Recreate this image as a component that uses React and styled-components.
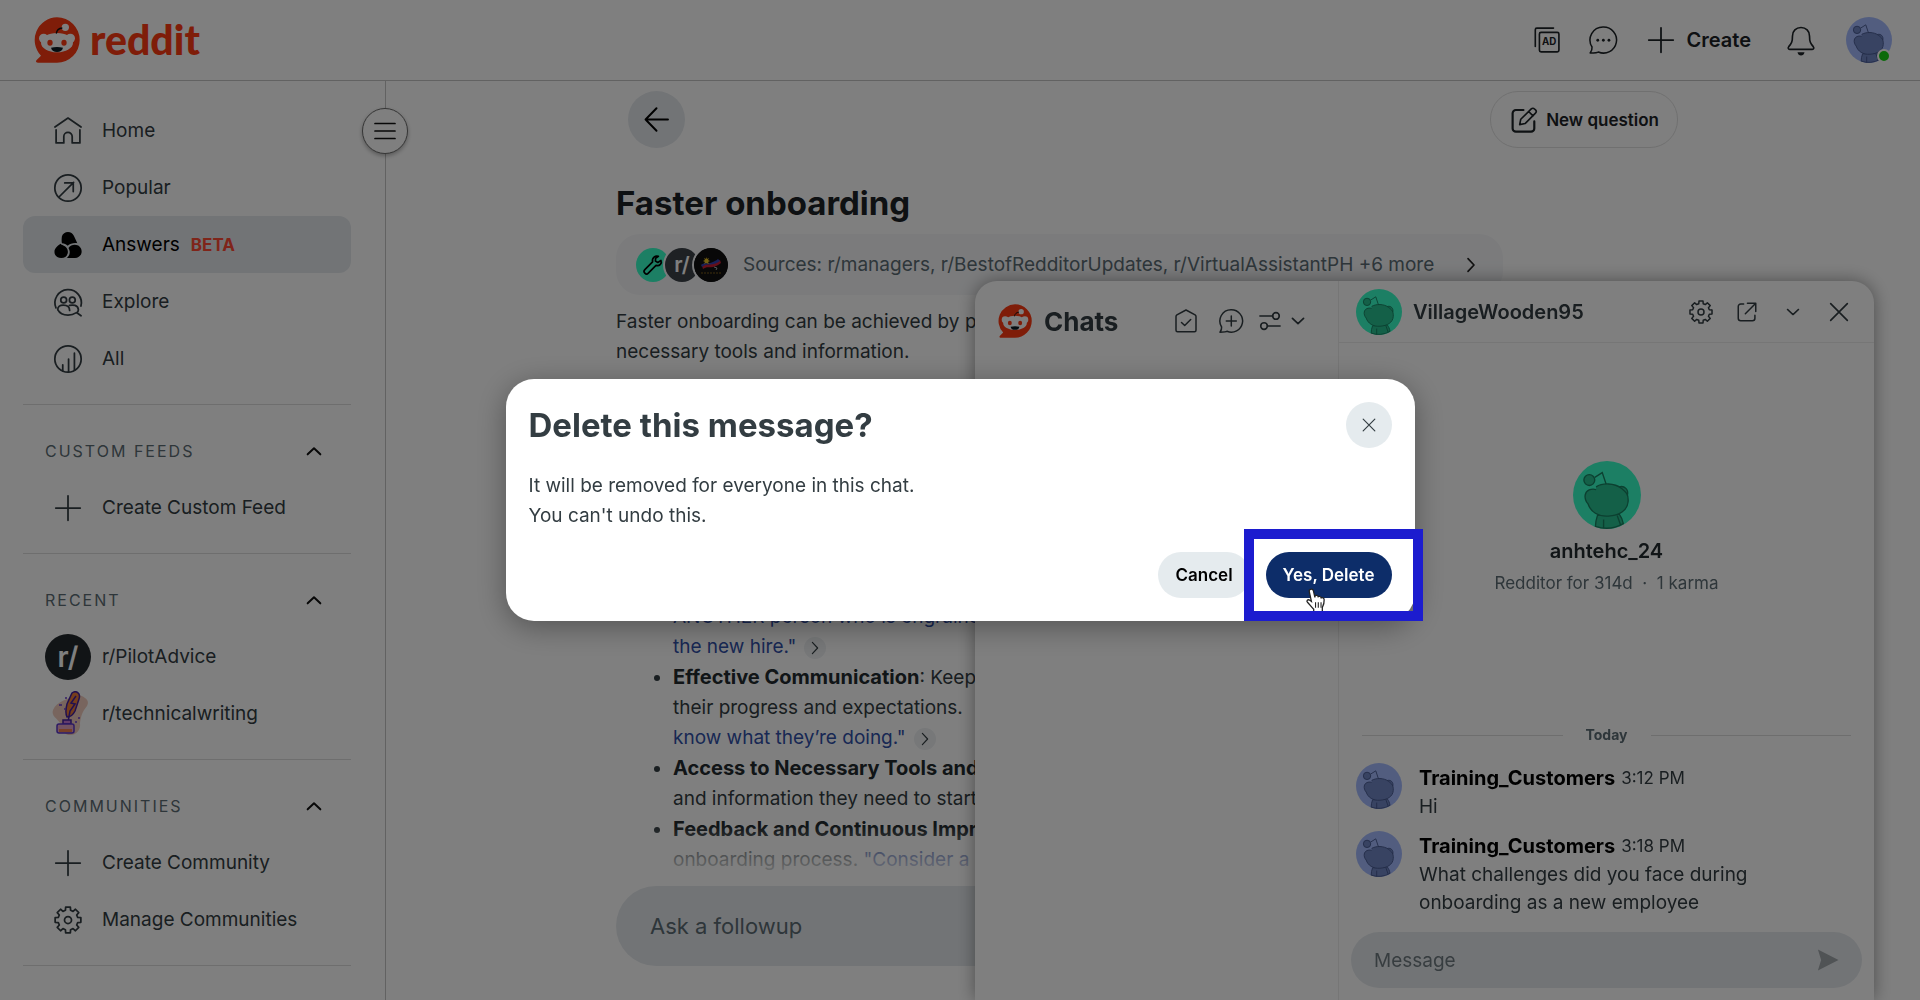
import React from "react";
import styled, { createGlobalStyle } from "styled-components";

const navItems = [
  { icon: "home", label: "Home" },
  { icon: "popular", label: "Popular" },
  { icon: "answers", label: "Answers", badge: "BETA", active: true },
  { icon: "explore", label: "Explore" },
  { icon: "all", label: "All" },
];

const messages = [
  { id: 1, user: "Training_Customers", time: "3:12 PM", text: "Hi" },
  {
    id: 2,
    user: "Training_Customers",
    time: "3:18 PM",
    text: "What challenges did you face during onboarding as a new employee",
  },
];

const gearPath = () => {
  const points = [];
  for (let i = 0; i < 8; i++) {
    const base = (i * Math.PI) / 4;
    [
      [8.6, -0.26],
      [11.2, -0.18],
      [11.2, 0.18],
      [8.6, 0.26],
    ].forEach(([r, a]) => {
      const x = 12 + r * Math.sin(base + a);
      const y = 12 - r * Math.cos(base + a);
      points.push(`${x.toFixed(2)} ${y.toFixed(2)}`);
    });
  }
  return `M${points.join("L")}Z`;
};

const icons = {
  home: (
    <>
      <path d="M.8 8.6 12 .9l11.2 7.7" />
      <path d="M1.8 11v11.2h6.6v-5.4a3.6 3.6 0 0 1 7.2 0v5.4h6.6V11" />
    </>
  ),
  popular: (
    <>
      <circle cx="12" cy="12" r="11.3" />
      <path d="M4.5 19.5 16.8 7.2M9.2 7.7h7.3V15" />
    </>
  ),
  answers: (
    <g fill="currentColor" stroke="none">
      <path d="M12 .8c2.300 0 4.100 1.200 5 3.200l3 6.500c-3.400-.4-6.200.3-8.300 2.200-1.300-1.300-2.900-2.100-4.900-2.200C6.400 9 6.500 6.500 6.800 4.600 7.400 2.200 9.600.8 12 .8Z" />
      <path d="M5.500 11c.6.800 1.400 1.100 2.500 1.400 2.400.8 3.900 3 3.900 5.400 0 3-2.200 5.400-5.600 5.400-3.300 0-5.900-2.100-5.900-5.300 0-2.800 2.300-4.900 5.100-6.900Z" />
      <path d="M17.800 11.800c3.400 0 5.900 2.500 5.900 5.700s-2.400 5.600-5.700 5.600h-7c2-1.600 2.800-3.600 2.400-6-.2-1-.5-1.800-1-2.600 1.400-1.800 3.200-2.700 5.400-2.700Z" />
    </g>
  ),
  explore: (
    <>
      <path d="M1.700 17A11.300 11.300 0 1 1 23.100 15.500" />
      <circle cx="8.300" cy="10.300" r="2.500" />
      <circle cx="15.700" cy="10.300" r="2.500" />
      <path d="M3.200 18.600c0-2.800 2-4 4.700-4 3.400 0 5.500 1 5.500 4.600M3.200 18.600c1.500 3 5 4.700 8.800 4.700 2.800 0 5-.7 6.800-2M13.300 14.900c3-.7 7.200-.4 7.600 3.700 0 1-.6 2-1.300 2.600l3.600 2.600" />
    </>
  ),
  all: (
    <>
      <circle cx="12" cy="12" r="11.300" />
      <path d="M7.500 22v-5M12.500 23V12M17.500 21.500V7" />
    </>
  ),
  plus: <path d="M12 1.500v21M1.500 12h21" />,
  gear: (
    <>
      <path d={gearPath()} />
      <circle cx="12" cy="12" r="3" />
    </>
  ),
  up: <path d="m2.500 17 9.500-9 9.500 9" />,
  down: <path d="m2.500 7.500 9.500 9 9.500-9" />,
  right: <path d="m7.500 2.500 9 9.500-9 9.500" />,
  menu: <path d="M2 4.500h20M2 12h20M2 19.500h20" />,
  back: <path d="M23 12H1.500M12 1.200 1.500 12 12 22.800" />,
  close: <path d="m2 2 20 20M22 2 2 22" />,
  ad: (
    <>
      <path d="M1.200 18V2.500C1.200 1.500 1.800 1 2.600 1H18" />
      <rect x="5" y="5" width="18" height="18" rx="1.500" />
      <text x="14" y="17" textAnchor="middle" fontSize="9" fontWeight="700" fill="currentColor" stroke="none">
        AD
      </text>
    </>
  ),
  chat: (
    <>
      <path d="M12.300.8A11.200 11.200 0 1 1 8 22.300c-.6.7-1.600.9-7 .9 1.300-1.800 1.800-3.300 1.600-5.200A11.200 11.200 0 0 1 12.300.8Z" />
      <g fill="currentColor" stroke="none">
        <circle cx="7.500" cy="12.200" r="1.200" />
        <circle cx="12.300" cy="12.200" r="1.200" />
        <circle cx="17.100" cy="12.200" r="1.200" />
      </g>
    </>
  ),
  chatPlus: (
    <>
      <path d="M12.300.8A11.200 11.200 0 1 1 8 22.300c-.6.7-1.600.9-7 .9 1.300-1.800 1.800-3.300 1.600-5.200A11.200 11.200 0 0 1 12.300.8Z" />
      <path d="M12.300 7v10M7.300 12h10" />
    </>
  ),
  bell: (
    <>
      <path d="M12 1.300c4.300 0 7.300 3 7.300 7.200 0 5 .8 6.400 3.200 9.200.9 1.200.4 2.300-.8 2.300H2.300c-1.200 0-1.700-1.100-.8-2.300 2.400-2.800 3.200-4.200 3.200-9.200 0-4.200 3-7.200 7.300-7.200Z" />
      <path d="M9 22.500h6c-.4 1.800-1.500 2.800-3 2.800s-2.600-1-3-2.800Z" fill="currentColor" stroke="none" />
    </>
  ),
  compose: (
    <>
      <path d="M11.500 2.800H4.500a3 3 0 0 0-3 3v14a3 3 0 0 0 3 3h14a3 3 0 0 0 3-3v-6.500" strokeWidth="2" />
      <path d="m8 16.300 1-5L18.700 1.800c.8-.8 2.200-.8 3 0l.9.900c.8.8.8 2.200 0 3L13 15.300l-5 1ZM16.300 4.200l4 4" />
    </>
  ),
  inbox: (
    <>
      <path d="M2 7.500a2 2 0 0 1 .9-1.700L12 1l9.100 4.800a2 2 0 0 1 .9 1.700v13.700a1.500 1.500 0 0 1-1.500 1.500h-17A1.500 1.500 0 0 1 2 21.200Z" />
      <path d="m7.500 13.500 3.200 3 6-6" />
    </>
  ),
  filter: (
    <>
      <path d="M1 6.500h14M10 17.500h13" />
      <circle cx="18.500" cy="6.500" r="3.600" />
      <circle cx="5.500" cy="17.500" r="3.600" />
    </>
  ),
  external: (
    <path d="M8 2.500H4.500a3 3 0 0 0-3 3v14a3 3 0 0 0 3 3h14a3 3 0 0 0 3-3V16M12.500 1.500h10v10M22.500 1.500 10 14" />
  ),
  wrench: (
    <path d="M21.500 6.500 17.800 9l-2.900-1.700.2-3.400 3.400-2.300c-3.500-1.300-8.200 1.500-7 6.700L2.200 17.600a2.900 2.900 0 0 0 4.200 4.200l9.200-9.300c4.500 1.100 7.500-2.500 5.900-6Z" />
  ),
  send: <path d="M1 .5 23.500 12 1 23.500 4.500 12Z" fill="currentColor" stroke="none" />,
};

const Icon = ({ name, size = 28, weight = 1 }) => (
  <Glyph $size={size} viewBox="0 0 24 24" strokeWidth={weight} aria-hidden="true">
    {icons[name]}
  </Glyph>
);

const Snoo = () => (
  <svg viewBox="0 0 138 138" aria-hidden="true">
    <path
      fill="#ff3a12"
      d="M69 1a68 68 0 1 1 0 136H12c-6 0-8-4-4-8l13-13A68 68 0 0 1 69 1Z"
    />
    <g fill="#fff">
      <circle cx="29" cy="64" r="14" />
      <circle cx="109" cy="64" r="14" />
      <ellipse cx="69" cy="77" rx="48" ry="29" />
      <circle cx="94" cy="31" r="11" />
    </g>
    <path d="M67 50c1-10 8-16 18-17" fill="none" stroke="#111" strokeWidth="4" />
    <g fill="#ff3a12">
      <ellipse cx="48" cy="77" rx="8" ry="9" />
      <ellipse cx="90" cy="77" rx="8" ry="9" />
    </g>
    <path fill="#0b1a22" d="M51 92q18-4 36 0c-2 9-9 13-18 13s-16-4-18-13Z" />
  </svg>
);

const UserAvatar = ({ color, size }) => {
  const [bg, fill, line] =
    color === "green" ? ["#38ffc8", "#28c090", "#188061"] : ["#a5bbff", "#7086c4", "#46588f"];
  return (
    <AvatarSvg $size={size} viewBox="0 0 100 100" aria-hidden="true">
      <circle cx="50" cy="50" r="50" fill={bg} />
      <g fill={fill} stroke={line} strokeWidth="2">
        <path d="M36 80c-2 6-3 10-3 16a50 50 0 0 0 41-4c-1-6-3-10-6-14Z" />
        <path d="M45 86v13M65 80l5 14" fill="none" />
        <path d="M32 24 43 17 49 35" fill="none" />
        <circle cx="24" cy="28" r="8" />
        <path d="M68 38c8-2 14 4 12 12l-6-2Z" />
        <path d="M34 38c9-6 27-6 37 2 6 5 11 8 10 20-1 13-13 20-29 21-15 1-26-6-30-18-3-3-5-9-4-13 1-7 9-10 16-8" />
      </g>
    </AvatarSvg>
  );
};

const WritingAvatar = () => (
  <AvatarSvg $size={46} viewBox="0 0 46 46" aria-hidden="true">
    <path d="M8 19C12 9 24 9 32 3c5 2 14 5 10 12-5 6-6 10-7 17 1 7-4 13-12 12-5-2-5-6-8-12-3-5-9-7-7-13Z" fill="#e8a890" opacity=".6" />
    <path d="M27 2c4-3 9 0 7 6l-4 12c-2 4-5 6-8 6-2-4-1-9 0-13Z" fill="#ec7c38" stroke="#43209f" strokeWidth="1.500" />
    <path d="m31 5-5 7 4 1-5 7-2 11" fill="none" stroke="#43209f" strokeWidth="1.500" />
    <rect x="18" y="29" width="8" height="4" fill="#c678d8" stroke="#43209f" strokeWidth="1.500" />
    <rect x="12" y="33" width="17" height="9" rx="2" fill="#e5a4c4" stroke="#5a35c8" strokeWidth="1.500" />
    <path d="M14 38h13v3H14Z" fill="#f08050" />
    <path d="M14 14h3M20 7h2M19 18h2M33 27h2M30 31h2" stroke="#6a3fd0" strokeWidth="1.500" />
  </AvatarSvg>
);

const FlagAvatar = () => (
  <svg viewBox="0 0 34 34" width="34" height="34" aria-hidden="true">
    <circle cx="17" cy="17" r="17" fill="#111" />
    <path d="M8 18c5-4 8 1 18-6l1 3c-8 7-13 2-18 6Z" fill="#c91f34" />
    <path d="M7 17c5-4 8 1 17-6l2 2c-8 6-12 1-18 6Z" fill="#3040b0" />
    <path d="m12 9 1 2 2-1-1 2 2 1-2 1 1 2-3-1-2 1 1-2-2-1 2-1-1-2 2 1Z" fill="#e8c020" />
    <path d="M7 25h20" stroke="#7d5c18" strokeDasharray="2 1" />
    <path d="m20 19 3 1-1 2" stroke="#aaa" fill="none" />
  </svg>
);

const Pointer = () => (
  <PointerSvg viewBox="0 0 24 28" aria-hidden="true">
    <path
      d="M6 2.500c1.500-.8 2.800 0 3.200 1.600l1.600 7 .2-1.700c1.500-1 3-.4 3.400 1 1.300-.8 2.800-.2 3.200 1.300 1.600-.8 3.200 0 3.300 2 .2 4-.7 6-2 8.500V27H9.500v-3c-2.500-2-3.800-4.500-6.800-7.500-1.500-1.700.3-3.500 2.300-2.400l2 1.500L4.700 5c-.3-1.200.2-2.200 1.300-2.500Z"
      fill="#fff"
      stroke="#222"
      strokeWidth="1.400"
    />
    <path d="M11.500 16.500v6M14.500 16.500v6M17.500 16.500v6" stroke="#222" strokeWidth="1.200" />
  </PointerSvg>
);

const NavSection = ({ title, children }) => (
  <>
    <Divider />
    <SectionButton type="button">
      {title}
      <Icon name="up" size={16} weight={3} />
    </SectionButton>
    {children}
  </>
);

export default function App() {
  return (
    <>
      <GlobalStyle />
      <Page>
        <Header>
          <Logo href="#">
            <Snoo />
            reddit
          </Logo>
          <Actions>
            <IconButton $size={56} aria-label="Advertise">
              <Icon name="ad" size={26} weight={1.500} />
            </IconButton>
            <IconButton $size={56} aria-label="Open chat">
              <Icon name="chat" weight={1.300} />
            </IconButton>
            <CreateButton>
              <Icon name="plus" weight={1.500} />
              Create
            </CreateButton>
            <IconButton $size={56} aria-label="Notifications">
              <Icon name="bell" weight={1.400} />
            </IconButton>
            <ProfileButton aria-label="Profile">
              <UserAvatar color="blue" size={46} />
              <OnlineDot />
            </ProfileButton>
          </Actions>
        </Header>

        <Body>
          <Sidebar>
            <MenuToggle aria-label="Collapse navigation">
              <Icon name="menu" size={24} weight={1.700} />
            </MenuToggle>
            {navItems.map((item) => (
              <NavLink key={item.label} href="#" $active={item.active}>
                <NavIcon>
                  <Icon name={item.icon} weight={1.500} />
                </NavIcon>
                {item.label}
                {item.badge && <Beta>{item.badge}</Beta>}
              </NavLink>
            ))}
            <NavSection title="CUSTOM FEEDS">
              <NavLink href="#">
                <NavIcon>
                  <Icon name="plus" weight={1.500} />
                </NavIcon>
                Create Custom Feed
              </NavLink>
            </NavSection>
            <NavSection title="RECENT">
              <NavLink href="#">
                <NavIcon>
                  <SubAvatar $size={46}>r/</SubAvatar>
                </NavIcon>
                r/PilotAdvice
              </NavLink>
              <NavLink href="#">
                <NavIcon>
                  <WritingAvatar />
                </NavIcon>
                r/technicalwriting
              </NavLink>
            </NavSection>
            <NavSection title="COMMUNITIES">
              <NavLink href="#">
                <NavIcon>
                  <Icon name="plus" weight={1.500} />
                </NavIcon>
                Create Community
              </NavLink>
              <NavLink href="#">
                <NavIcon>
                  <Icon name="gear" weight={1.500} />
                </NavIcon>
                Manage Communities
              </NavLink>
            </NavSection>
            <Divider />
          </Sidebar>

          <Main>
            <Toolbar>
              <BackButton aria-label="Back">
                <Icon name="back" size={25} weight={1.900} />
              </BackButton>
              <NewQuestion>
                <Icon name="compose" size={26} weight={1.500} />
                New question
              </NewQuestion>
            </Toolbar>
            <Answer>
              <Title>Faster onboarding</Title>
              <Sources>
                <SourceAvatars>
                  <SubAvatar $size={34} $bg="#38ffc8">
                    <Icon name="wrench" size={20} weight={2} />
                  </SubAvatar>
                  <SubAvatar $size={34} $bg="#3c4248">r/</SubAvatar>
                  <SubAvatar $size={34}>
                    <FlagAvatar />
                  </SubAvatar>
                </SourceAvatars>
                Sources: r/managers, r/BestofRedditorUpdates, r/VirtualAssistantPH +6 more
                <Icon name="right" size={16} weight={2.500} />
              </Sources>
              <Paragraph>
                Faster onboarding can be achieved by providing
                <br />
                necessary tools and information.
              </Paragraph>
              <Points>
                <li className="open">
                  <a href="#">
                    ANOTHER person who is engrained
                    <br />
                    the new hire."
                  </a>
                  <Cite aria-label="Open source">
                    <Icon name="right" size={14} weight={2} />
                  </Cite>
                </li>
                <li>
                  <b>Effective Communication</b>: Keep new hires
                  <br />
                  their progress and expectations.
                  <br />
                  <a href="#">know what they’re doing."</a>
                  <Cite aria-label="Open source">
                    <Icon name="right" size={14} weight={2} />
                  </Cite>
                </li>
                <li>
                  <b>Access to Necessary Tools and</b>
                  <br />
                  and information they need to start
                </li>
                <li>
                  <b>Feedback and Continuous Improvement</b>
                  <br />
                  onboarding process. <a href="#">"Consider a</a>
                </li>
              </Points>
            </Answer>
            <Followup>
              <input aria-label="Ask a followup" placeholder="Ask a followup" />
            </Followup>
          </Main>
        </Body>

        <ChatWindow>
          <ChatList>
            <Snoo />
            <h2>Chats</h2>
            <IconButton $size={45} aria-label="Threads">
              <Icon name="inbox" size={24} weight={1.500} />
            </IconButton>
            <IconButton $size={45} aria-label="New chat">
              <Icon name="chatPlus" size={24} weight={1.500} />
            </IconButton>
            <FilterButton aria-label="Filter chats">
              <Icon name="filter" size={22} weight={1.800} />
              <Icon name="down" size={14} weight={3} />
            </FilterButton>
          </ChatList>
          <Conversation>
            <ChatHeader>
              <UserAvatar color="green" size={46} />
              <h3>VillageWooden95</h3>
              <IconButton $size={46} aria-label="Settings">
                <Icon name="gear" size={24} weight={1.500} />
              </IconButton>
              <IconButton $size={46} aria-label="Open in new window">
                <Icon name="external" size={20} weight={1.800} />
              </IconButton>
              <IconButton $size={46} aria-label="Minimize">
                <Icon name="down" size={14} weight={2.400} />
              </IconButton>
              <IconButton $size={46} aria-label="Close chat">
                <Icon name="close" size={20} weight={2} />
              </IconButton>
            </ChatHeader>
            <Profile>
              <UserAvatar color="green" size={68} />
              <strong>anhtehc_24</strong>
              <span>Redditor for 314d &nbsp;·&nbsp; 1 karma</span>
            </Profile>
            <DayLine>Today</DayLine>
            {messages.map((message) => (
              <Message key={message.id}>
                <UserAvatar color="blue" size={46} />
                <div>
                  <MessageHead>
                    <b>{message.user}</b>
                    <time>{message.time}</time>
                  </MessageHead>
                  <p>{message.text}</p>
                </div>
              </Message>
            ))}
            <Composer>
              <input aria-label="Message" placeholder="Message" />
              <button type="button" aria-label="Send">
                <Icon name="send" size={22} />
              </button>
            </Composer>
          </Conversation>
        </ChatWindow>
      </Page>

      <Overlay>
        <Dialog role="dialog" aria-modal="true" aria-labelledby="dialog-title">
          <DialogTop>
            <h1 id="dialog-title">Delete this message?</h1>
            <RoundClose aria-label="Close">
              <Icon name="close" size={14} weight={2} />
            </RoundClose>
          </DialogTop>
          <p>
            It will be removed for everyone in this chat.
            <br />
            You can't undo this.
          </p>
          <DialogButtons>
            <PillButton>Cancel</PillButton>
            <PillButton $primary>Yes, Delete</PillButton>
          </DialogButtons>
          <Pointer />
          <Highlight />
        </Dialog>
      </Overlay>
    </>
  );
}

const GlobalStyle = createGlobalStyle`
  * {
    box-sizing: border-box;
  }
  body {
    margin: 0;
    overflow: hidden;
    background: #fff;
    color: #333d42;
    font-family: Inter, "Liberation Sans", sans-serif;
    font-size: 19px;
  }
  h1, h2, h3, p, ul {
    margin: 0;
    padding: 0;
  }
  button {
    border: 0;
    padding: 0;
    background: none;
    color: inherit;
    font: inherit;
    cursor: pointer;
  }
  a {
    text-decoration: none;
  }
  input {
    min-width: 0;
    padding: 0;
    border: 0;
    outline: 0;
    background: none;
    font: inherit;
  }
`;

const Glyph = styled.svg`
  flex: none;
  width: ${({ $size }) => $size}px;
  height: ${({ $size }) => $size}px;
  overflow: visible;
  fill: none;
  stroke: currentColor;
  stroke-linecap: round;
  stroke-linejoin: round;
`;

const AvatarSvg = styled.svg`
  flex: none;
  display: block;
  width: ${({ $size }) => $size}px;
  height: ${({ $size }) => $size}px;
`;

const Page = styled.div`
  display: flex;
  flex-direction: column;
  height: 100vh;
`;

const Header = styled.header`
  display: flex;
  align-items: center;
  justify-content: space-between;
  flex: none;
  height: 81px;
  padding: 0 28px 0 34px;
  border-bottom: 1px solid #c4c4c4;
`;

const Logo = styled.a`
  display: flex;
  align-items: center;
  gap: 10px;
  color: #ff3a12;
  font-family: Lato, sans-serif;
  font-size: 41px;
  font-weight: 900;
  line-height: 46px;
  svg {
    width: 46px;
    height: 46px;
  }
`;

const Actions = styled.div`
  display: flex;
  align-items: center;
  color: #1c2226;
`;

const IconButton = styled.button`
  display: flex;
  align-items: center;
  justify-content: center;
  flex: none;
  width: ${({ $size }) => $size}px;
  height: ${({ $size }) => $size}px;
`;

const CreateButton = styled.button`
  display: flex;
  align-items: center;
  gap: 12px;
  padding: 0 22px 0 16px;
  font-size: 20px;
  font-weight: 600;
`;

const ProfileButton = styled.button`
  position: relative;
  margin-left: 17px;
`;

const OnlineDot = styled.span`
  position: absolute;
  right: 1px;
  bottom: 0;
  width: 14px;
  height: 14px;
  border: 2px solid #fff;
  border-radius: 50%;
  background: #16d414;
`;

const Body = styled.div`
  display: flex;
  flex: 1;
  min-height: 0;
`;

const Sidebar = styled.nav`
  position: relative;
  flex: none;
  width: 386px;
  padding: 21px 34px 0 23px;
  border-right: 1px solid #c4c4c4;
`;

const MenuToggle = styled.button`
  position: absolute;
  top: 27px;
  right: -23px;
  display: flex;
  align-items: center;
  justify-content: center;
  width: 46px;
  height: 46px;
  border: 1px solid #6b6b6b;
  border-radius: 50%;
  background: #fff;
  color: #111;
  box-shadow: 0 2px 4px rgba(0, 0, 0, 0.3);
`;

const NavLink = styled.a`
  display: flex;
  align-items: center;
  gap: 11px;
  height: 57px;
  padding-left: 22px;
  border-radius: 12px;
  background: ${({ $active }) => ($active ? "#e5e9ed" : "transparent")};
  color: ${({ $active }) => ($active ? "#000" : "#333d42")};
`;

const NavIcon = styled.span`
  display: flex;
  justify-content: center;
  width: 46px;
`;

const Beta = styled.span`
  color: #ff4a35;
  font-size: 17px;
  font-weight: 700;
`;

const Divider = styled.hr`
  height: 1px;
  margin: 17px 0;
  border: 0;
  background: #dcdcdc;
`;

const SectionButton = styled.button`
  display: flex;
  align-items: center;
  justify-content: space-between;
  width: 100%;
  height: 57px;
  padding: 0 29px 0 22px;
  color: #5c6c74;
  font-size: 16px;
  letter-spacing: 2px;
  svg {
    color: #111;
  }
`;

const SubAvatar = styled.span`
  display: flex;
  align-items: center;
  justify-content: center;
  flex: none;
  width: ${({ $size }) => $size}px;
  height: ${({ $size }) => $size}px;
  border-radius: 50%;
  background: ${({ $bg }) => $bg || "#23282c"};
  color: ${({ $bg }) => ($bg === "#38ffc8" ? "#000" : "#fff")};
  font-size: ${({ $size }) => ($size > 40 ? 28 : 21)}px;
  font-weight: 600;
`;

const Main = styled.main`
  display: flex;
  flex: 1;
  flex-direction: column;
  align-items: center;
  min-width: 0;
  padding: 10px 0 34px;
`;

const Toolbar = styled.div`
  display: flex;
  justify-content: space-between;
  width: 100%;
  max-width: 1050px;
`;

const BackButton = styled.button`
  display: flex;
  align-items: center;
  justify-content: center;
  width: 57px;
  height: 57px;
  border-radius: 50%;
  background: #e5e9ed;
  color: #000;
`;

const NewQuestion = styled.button`
  display: flex;
  align-items: center;
  gap: 9px;
  height: 57px;
  padding: 0 18px 0 20px;
  border: 1px solid #e0e0e0;
  border-radius: 28px;
  color: #1c2226;
  font-size: 17px;
  font-weight: 600;
`;

const Answer = styled.article`
  position: relative;
  flex: 1;
  width: 100%;
  max-width: 1074px;
  min-height: 0;
  padding-top: 32px;
  overflow: hidden;
  line-height: 30px;
  &::after {
    content: "";
    position: absolute;
    inset: auto 0 0;
    height: 56px;
    background: linear-gradient(rgba(255, 255, 255, 0), #fff);
  }
`;

const Title = styled.h1`
  color: #1c2226;
  font-size: 33px;
  font-weight: 700;
  line-height: 46px;
`;

const Sources = styled.button`
  display: flex;
  align-items: center;
  gap: 15px;
  width: 100%;
  max-width: 887px;
  height: 61px;
  margin: 8px 0 12px;
  padding: 0 24px 0 20px;
  border-radius: 24px;
  background: #f6f7f9;
  color: #5c6c74;
  > svg {
    margin-left: auto;
    color: #222;
  }
`;

const SourceAvatars = styled.span`
  display: flex;
  > span {
    overflow: hidden;
    box-shadow: 0 0 0 2px #f6f7f9;
  }
  > span + span {
    margin-left: -5px;
  }
`;

const Paragraph = styled.p`
  white-space: nowrap;
`;

const Points = styled.ul`
  margin-top: 235px;
  padding-left: 57px;
  white-space: nowrap;
  b {
    color: #222a2e;
    font-size: 20px;
    font-weight: 700;
  }
  a {
    color: #3150a8;
  }
  .open {
    list-style: none;
  }
`;

const Cite = styled.button`
  display: inline-flex;
  align-items: center;
  justify-content: center;
  width: 22px;
  height: 22px;
  margin-left: 8px;
  border-radius: 50%;
  background: #eef1f3;
  vertical-align: middle;
`;

const Followup = styled.div`
  display: flex;
  flex: none;
  width: 100%;
  max-width: 1074px;
  height: 80px;
  margin-top: 4px;
  padding: 0 34px;
  border-radius: 40px;
  background: #e5e9ed;
  input {
    flex: 1;
    font-size: 22px;
  }
  input::placeholder {
    color: #5c6c74;
  }
`;

const ChatWindow = styled.section`
  position: fixed;
  right: 46px;
  bottom: 0;
  display: flex;
  width: 899px;
  height: 719px;
  border-radius: 22px 22px 0 0;
  background: #fff;
  box-shadow: 0 0 18px rgba(0, 0, 0, 0.4);
`;

const ChatList = styled.div`
  display: flex;
  align-items: center;
  align-self: flex-start;
  width: 363px;
  height: 80px;
  padding: 0 33px 0 23px;
  h2 {
    flex: 1;
    margin-left: 12px;
    font-size: 26px;
  }
  > svg {
    width: 34px;
    height: 34px;
  }
`;

const FilterButton = styled.button`
  display: flex;
  align-items: center;
  gap: 10px;
  margin-left: 6px;
`;

const Conversation = styled.div`
  display: flex;
  flex: 1;
  flex-direction: column;
  min-width: 0;
  padding-bottom: 12px;
  border-left: 1px solid #ededed;
`;

const ChatHeader = styled.div`
  display: flex;
  align-items: center;
  flex: none;
  height: 62px;
  padding: 0 12px 0 17px;
  border-bottom: 1px solid #ededed;
  h3 {
    flex: 1;
    margin-left: 11px;
    font-size: 20px;
    font-weight: 600;
  }
`;

const Profile = styled.div`
  display: flex;
  flex: 1;
  flex-direction: column;
  align-items: center;
  padding-top: 118px;
  strong {
    margin: 8px 0;
    color: #222a2e;
    font-size: 20px;
    font-weight: 600;
    line-height: 28px;
  }
  span {
    color: #5c6c74;
    font-size: 17px;
    line-height: 20px;
  }
`;

const DayLine = styled.div`
  display: flex;
  align-items: center;
  gap: 23px;
  margin: 0 23px 18px;
  color: #5c6c74;
  font-size: 14px;
  font-weight: 700;
  line-height: 20px;
  &::before,
  &::after {
    content: "";
    flex: 1;
    height: 1px;
    background: #dcdcdc;
  }
`;

const Message = styled.div`
  display: flex;
  gap: 17px;
  margin: 0 80px 10px 17px;
  line-height: 28px;
`;

const MessageHead = styled.div`
  display: flex;
  gap: 6px;
  line-height: 30px;
  b {
    color: #000;
    font-size: 20px;
    font-weight: 700;
  }
  time {
    font-size: 17px;
  }
`;

const Composer = styled.div`
  display: flex;
  align-items: center;
  flex: none;
  height: 56px;
  margin: 5px 12px 0;
  padding: 0 23px;
  border-radius: 28px;
  background: #e5e9ed;
  color: #a0a6aa;
  input {
    flex: 1;
  }
  input::placeholder {
    color: #6f7a80;
  }
  button {
    display: flex;
  }
`;

const Overlay = styled.div`
  position: fixed;
  inset: 0;
  display: flex;
  align-items: center;
  justify-content: center;
  background: rgba(0, 0, 0, 0.5);
`;

const Dialog = styled.div`
  position: relative;
  width: 909px;
  max-width: 100%;
  padding: 23px;
  border-radius: 28px;
  background: #fff;
  box-shadow: 0 6px 30px rgba(0, 0, 0, 0.35);
  p {
    margin: 23px 0 21px;
    line-height: 30px;
  }
`;

const DialogTop = styled.div`
  display: flex;
  align-items: center;
  justify-content: space-between;
  h1 {
    font-size: 33px;
    font-weight: 700;
    line-height: 46px;
  }
`;

const RoundClose = styled.button`
  display: flex;
  align-items: center;
  justify-content: center;
  width: 46px;
  height: 46px;
  border-radius: 50%;
  background: #e5ebee;
`;

const DialogButtons = styled.div`
  display: flex;
  justify-content: flex-end;
  gap: 16px;
`;

const PillButton = styled.button`
  height: 46px;
  padding: 0 17px;
  border-radius: 23px;
  background: ${({ $primary }) => ($primary ? "#0d2d69" : "#e5ebee")};
  color: ${({ $primary }) => ($primary ? "#fff" : "#000")};
  font-size: 17px;
  font-weight: 600;
`;

const PointerSvg = styled.svg`
  position: absolute;
  right: 88px;
  bottom: 8px;
  width: 22px;
  height: 26px;
`;

const Highlight = styled.span`
  position: absolute;
  right: -8px;
  bottom: 0;
  width: 179px;
  height: 92px;
  border: 10px solid #1c1ccf;
  pointer-events: none;
`;
